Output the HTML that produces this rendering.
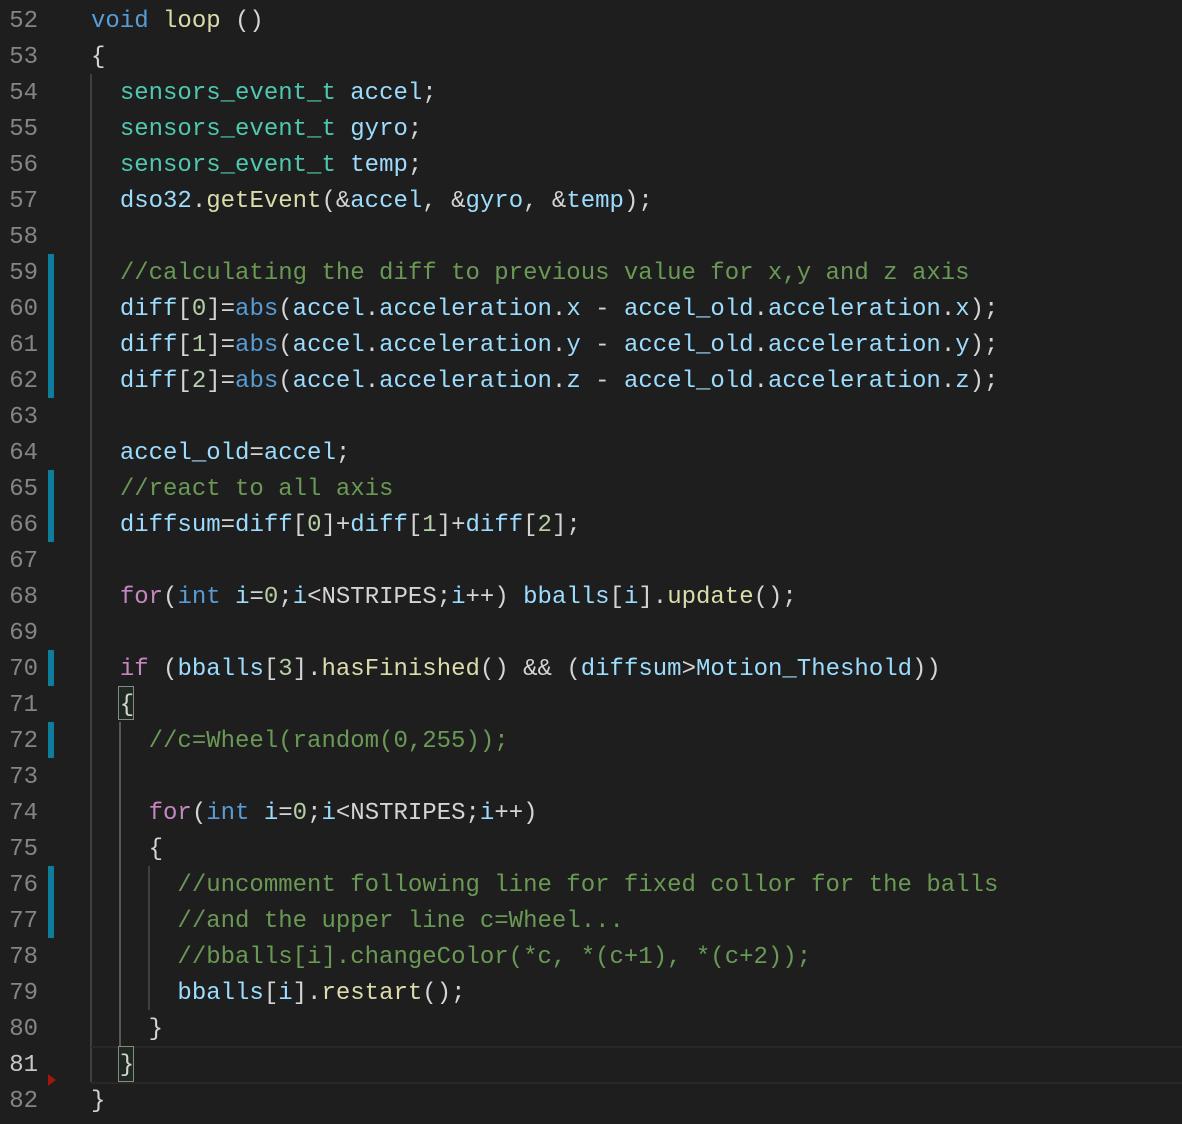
<!DOCTYPE html>
<html><head><meta charset="utf-8"><style>
body{margin:0;width:1182px;height:1124px;background:#1e1e1e;overflow:hidden;position:relative;font-family:"Liberation Mono",monospace;font-size:24px;}
.l{position:absolute;left:91px;height:36px;line-height:36px;margin-top:2px;white-space:pre;color:#d4d4d4}
.n{position:absolute;left:0;width:38px;text-align:right;height:36px;line-height:36px;margin-top:2px;color:#858585}
.g{position:absolute;left:48px;width:6px;height:36px;background:#0c7d9d}
.ig{position:absolute;width:2px;background:#404040}
.k{color:#569cd6}.c{color:#c586c0}.t{color:#4ec9b0}.v{color:#9cdcfe}.f{color:#dcdcaa}.m{color:#6a9955}.d{color:#b5cea8}
</style></head><body>
<div class="ig" style="left:90px;top:74px;height:1008px"></div>
<div class="ig" style="left:119px;top:722px;height:324px;background:#585858"></div>
<div class="ig" style="left:148px;top:866px;height:144px"></div>
<div style="position:absolute;left:91px;top:1046px;width:1091px;height:34px;border-top:2px solid #282828;border-bottom:2px solid #282828"></div>
<div style="position:absolute;left:118px;top:686px;width:14px;height:32px;border:1px solid #888;background:#1e2a20"></div>
<div style="position:absolute;left:118px;top:1046px;width:14px;height:34px;border:1px solid #888;background:#1e2a20"></div>
<div style="position:absolute;left:48px;top:1074px;width:0;height:0;border-top:6px solid transparent;border-bottom:6px solid transparent;border-left:8px solid #a1160f"></div>
<div class="g" style="top:254px;height:144px"></div>
<div class="g" style="top:470px;height:72px"></div>
<div class="g" style="top:650px"></div>
<div class="g" style="top:722px"></div>
<div class="g" style="top:866px;height:72px"></div>

<div class="n" style="top:2px">52</div><div class="l" style="top:2px"><span class="k">void</span> <span class="f">loop</span> ()</div>
<div class="n" style="top:38px">53</div><div class="l" style="top:38px">{</div>
<div class="n" style="top:74px">54</div><div class="l" style="top:74px">  <span class="t">sensors_event_t</span> <span class="v">accel</span>;</div>
<div class="n" style="top:110px">55</div><div class="l" style="top:110px">  <span class="t">sensors_event_t</span> <span class="v">gyro</span>;</div>
<div class="n" style="top:146px">56</div><div class="l" style="top:146px">  <span class="t">sensors_event_t</span> <span class="v">temp</span>;</div>
<div class="n" style="top:182px">57</div><div class="l" style="top:182px">  <span class="v">dso32</span>.<span class="f">getEvent</span>(&amp;<span class="v">accel</span>, &amp;<span class="v">gyro</span>, &amp;<span class="v">temp</span>);</div>
<div class="n" style="top:218px">58</div>
<div class="n" style="top:254px">59</div><div class="l" style="top:254px">  <span class="m">//calculating the diff to previous value for x,y and z axis</span></div>
<div class="n" style="top:290px">60</div><div class="l" style="top:290px">  <span class="v">diff</span>[<span class="d">0</span>]=<span class="k">abs</span>(<span class="v">accel</span>.<span class="v">acceleration</span>.<span class="v">x</span> - <span class="v">accel_old</span>.<span class="v">acceleration</span>.<span class="v">x</span>);</div>
<div class="n" style="top:326px">61</div><div class="l" style="top:326px">  <span class="v">diff</span>[<span class="d">1</span>]=<span class="k">abs</span>(<span class="v">accel</span>.<span class="v">acceleration</span>.<span class="v">y</span> - <span class="v">accel_old</span>.<span class="v">acceleration</span>.<span class="v">y</span>);</div>
<div class="n" style="top:362px">62</div><div class="l" style="top:362px">  <span class="v">diff</span>[<span class="d">2</span>]=<span class="k">abs</span>(<span class="v">accel</span>.<span class="v">acceleration</span>.<span class="v">z</span> - <span class="v">accel_old</span>.<span class="v">acceleration</span>.<span class="v">z</span>);</div>
<div class="n" style="top:398px">63</div>
<div class="n" style="top:434px">64</div><div class="l" style="top:434px">  <span class="v">accel_old</span>=<span class="v">accel</span>;</div>
<div class="n" style="top:470px">65</div><div class="l" style="top:470px">  <span class="m">//react to all axis</span></div>
<div class="n" style="top:506px">66</div><div class="l" style="top:506px">  <span class="v">diffsum</span>=<span class="v">diff</span>[<span class="d">0</span>]+<span class="v">diff</span>[<span class="d">1</span>]+<span class="v">diff</span>[<span class="d">2</span>];</div>
<div class="n" style="top:542px">67</div>
<div class="n" style="top:578px">68</div><div class="l" style="top:578px">  <span class="c">for</span>(<span class="k">int</span> <span class="v">i</span>=<span class="d">0</span>;<span class="v">i</span>&lt;NSTRIPES;<span class="v">i</span>++) <span class="v">bballs</span>[<span class="v">i</span>].<span class="f">update</span>();</div>
<div class="n" style="top:614px">69</div>
<div class="n" style="top:650px">70</div><div class="l" style="top:650px">  <span class="c">if</span> (<span class="v">bballs</span>[<span class="d">3</span>].<span class="f">hasFinished</span>() &amp;&amp; (<span class="v">diffsum</span>&gt;<span class="v">Motion_Theshold</span>))</div>
<div class="n" style="top:686px">71</div><div class="l" style="top:686px">  {</div>
<div class="n" style="top:722px">72</div><div class="l" style="top:722px">    <span class="m">//c=Wheel(random(0,255));</span></div>
<div class="n" style="top:758px">73</div>
<div class="n" style="top:794px">74</div><div class="l" style="top:794px">    <span class="c">for</span>(<span class="k">int</span> <span class="v">i</span>=<span class="d">0</span>;<span class="v">i</span>&lt;NSTRIPES;<span class="v">i</span>++)</div>
<div class="n" style="top:830px">75</div><div class="l" style="top:830px">    {</div>
<div class="n" style="top:866px">76</div><div class="l" style="top:866px">      <span class="m">//uncomment following line for fixed collor for the balls</span></div>
<div class="n" style="top:902px">77</div><div class="l" style="top:902px">      <span class="m">//and the upper line c=Wheel...</span></div>
<div class="n" style="top:938px">78</div><div class="l" style="top:938px">      <span class="m">//bballs[i].changeColor(*c, *(c+1), *(c+2));</span></div>
<div class="n" style="top:974px">79</div><div class="l" style="top:974px">      <span class="v">bballs</span>[<span class="v">i</span>].<span class="f">restart</span>();</div>
<div class="n" style="top:1010px">80</div><div class="l" style="top:1010px">    }</div>
<div class="n" style="top:1046px;color:#c6c6c6">81</div><div class="l" style="top:1046px">  }</div>
<div class="n" style="top:1082px">82</div><div class="l" style="top:1082px">}</div>
</body></html>
